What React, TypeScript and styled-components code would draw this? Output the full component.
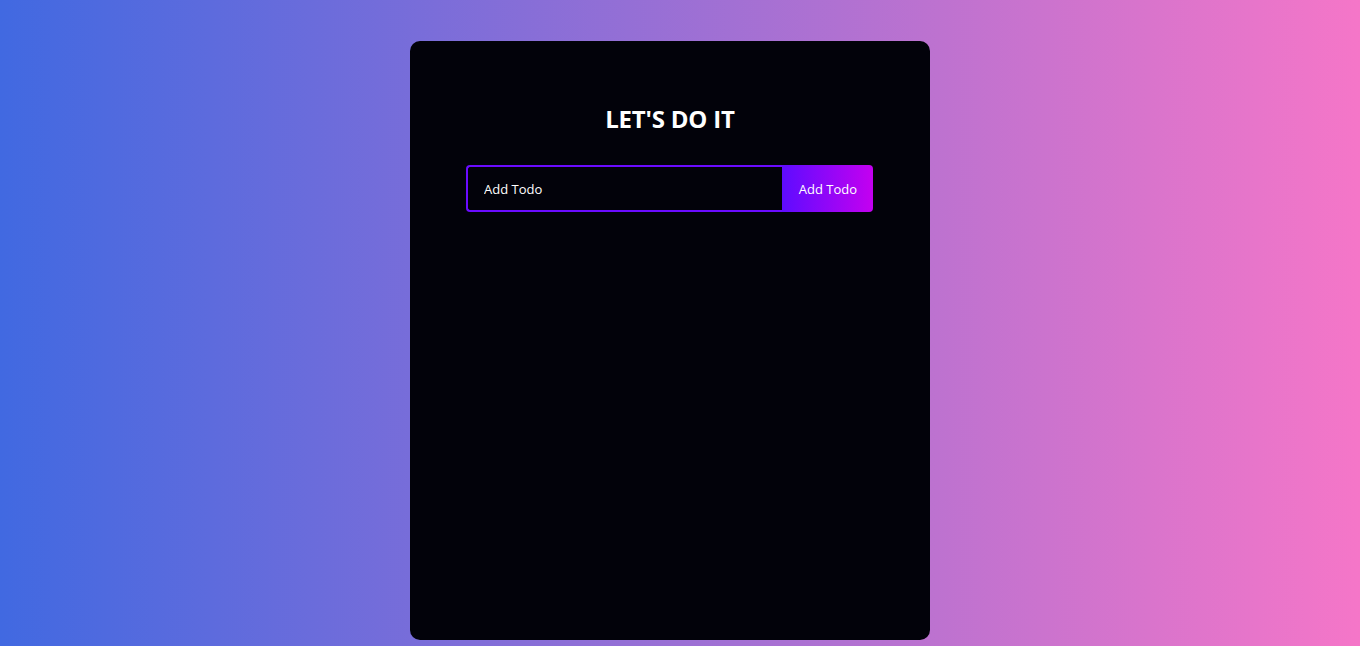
import React, { useEffect, useState } from 'react';
import styled, { createGlobalStyle } from 'styled-components';

const GlobalStyle = createGlobalStyle`
  html, body {
    margin: 0;
    padding: 0;
  }

  body {
    background: linear-gradient(90deg, #4169e1 0%, #f576c8 100%);
    font-family: "Open Sans", "Noto Sans", sans-serif;
  }
`;

const Page = styled.div`
  min-height: 1022px;
  padding: 104px 20px 0 0;
  box-sizing: border-box;
  display: flex;
  justify-content: center;
  align-items: flex-start;
`;

const TodoWrapper = styled.div`
  width: 520px;
  height: 599px;
  box-sizing: border-box;
  padding: 59px 56px 0;
  background: #02020a;
  border-radius: 10px;
`;

const Title = styled.h1`
  margin: 0 0 27px;
  color: #fff;
  font-size: 24px;
  font-weight: 700;
  text-align: center;
  line-height: 38px;
  letter-spacing: -0.2px;
`;

const TodoForm = styled.form`
  display: flex;
  width: 407px;
  height: 47px;
`;

const TodoInput = styled.input`
  flex: 1;
  min-width: 0;
  height: 47px;
  box-sizing: border-box;
  padding: 0 16px;
  background: none;
  border: 2px solid #6a0bff;
  border-right: none;
  border-radius: 4px 0 0 4px;
  color: #fff;
  font-family: inherit;
  font-size: 13px;
  outline: none;

  &::placeholder {
    color: #fff;
    opacity: 1;
  }
`;

const TodoButton = styled.button`
  height: 47px;
  padding: 0 16px 0 17px;
  border: none;
  border-radius: 0 4px 4px 0;
  background: linear-gradient(90deg, #5e0cff 0%, #c400f0 100%);
  color: #fff;
  font-family: inherit;
  font-size: 13px;
  cursor: pointer;
`;

export default function App() {
  const [value, setValue] = useState('');

  useEffect(() => {
    window.scrollTo(0, 63);
  }, []);

  return (
    <>
      <GlobalStyle />
      <Page>
        <TodoWrapper>
          <Title>LET'S DO IT</Title>
          <TodoForm onSubmit={(e) => { e.preventDefault(); setValue(''); }}>
            <TodoInput
              type="text"
              placeholder="Add Todo"
              value={value}
              onChange={(e) => setValue(e.target.value)}
            />
            <TodoButton type="submit">Add Todo</TodoButton>
          </TodoForm>
        </TodoWrapper>
      </Page>
    </>
  );
}
